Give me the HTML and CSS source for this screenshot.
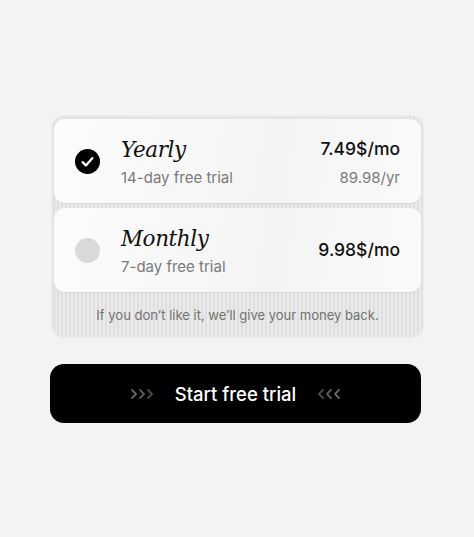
FILE: index.html
```html
<!DOCTYPE html>
<html>
<head>
<meta charset="utf-8">
<link rel="stylesheet" href="styles.css">
</head>
<body>
<div class="page">
  <div class="plans">
    <div class="card">
      <div class="radio checked">
        <svg width="25" height="25" viewBox="0 0 25 25"><circle cx="12.5" cy="12.5" r="12.5" fill="#000"/><path d="M7.6 13.1l3.3 3.3 6.4-7.2" fill="none" stroke="#fff" stroke-width="2.3" stroke-linecap="round" stroke-linejoin="round"/></svg>
      </div>
      <div class="info">
        <div class="title">Yearly</div>
        <div class="sub">14-day free trial</div>
      </div>
      <div class="price with-sub">
        <div class="amount">7.49$/mo</div>
        <div class="sub">89.98/yr</div>
      </div>
    </div>
    <div class="card">
      <div class="radio"></div>
      <div class="info">
        <div class="title">Monthly</div>
        <div class="sub">7-day free trial</div>
      </div>
      <div class="price">
        <div class="amount">9.98$/mo</div>
      </div>
    </div>
    <div class="note">If you don’t like it, we’ll give your money back.</div>
  </div>
  <button class="cta">
    <svg class="chev" width="24" height="12" viewBox="0 0 24 12"><g fill="none" stroke-width="1.8" stroke-linecap="round" stroke-linejoin="round"><path d="M2 2l4 4-4 4" stroke="#666"/><path d="M10 2l4 4-4 4" stroke="#5a5a5a"/><path d="M18 2l4 4-4 4" stroke="#4a4a4a"/></g></svg>
    <span class="label">Start free trial</span>
    <svg class="chev" width="24" height="12" viewBox="0 0 24 12"><g fill="none" stroke-width="1.8" stroke-linecap="round" stroke-linejoin="round"><path d="M6 2l-4 4 4 4" stroke="#4a4a4a"/><path d="M14 2l-4 4 4 4" stroke="#5a5a5a"/><path d="M22 2l-4 4 4 4" stroke="#666"/></g></svg>
  </button>
</div>
</body>
</html>
```
FILE: styles.css
```css
html, body { margin: 0; padding: 0; }
body {
  background: #f3f3f3;
  width: 474px;
  height: 537px;
  font-family: Inter, "Noto Sans", sans-serif;
}
.page {
  padding: 115px 0 0 50px;
}
.plans {
  margin-left: 1px;
  width: 367px;
  padding: 4px 3px 0;
  border-radius: 13px;
  background-color: #e3e3e3;
  background-image: repeating-linear-gradient(90deg, rgba(255,255,255,0.25) 0 2px, rgba(0,0,0,0.02) 2px 4px);
  box-shadow: inset 0 0 0 1.5px #ebebeb;
  display: flex;
  flex-direction: column;
  gap: 5px;
}
.card {
  height: 84px;
  box-sizing: border-box;
  background: linear-gradient(100deg, #fcfcfc, #f4f4f4 60%, #fafafa);
  border-radius: 11px;
  box-shadow: 0 1px 1px rgba(0,0,0,0.06);
  display: flex;
  align-items: center;
  padding: 0 21px 0 21px;
}
.radio {
  width: 25px;
  height: 25px;
  border-radius: 50%;
  background: #d9d9d9;
  flex: none;
}
.radio svg { display: block; }
.info {
  margin-left: 21px;
  flex: 1;
  display: flex;
  flex-direction: column;
  padding-top: 3px;
}
.title {
  font-family: "DejaVu Serif", serif;
  font-style: italic;
  font-size: 21.5px;
  line-height: 26px;
  color: #111;
  letter-spacing: -0.4px;
}
.sub {
  font-size: 15px;
  line-height: 20px;
  color: #7a7a7a;
  margin-top: 5px;
}
.price {
  display: flex;
  flex-direction: column;
  align-items: flex-end;
}
.price.with-sub { padding-top: 4px; }
.amount {
  font-size: 17.5px;
  font-weight: 500;
  line-height: 22px;
  color: #111;
}
.price .sub { margin-top: 8px; }
.note {
  height: 46px;
  display: flex;
  align-items: center;
  justify-content: center;
  font-size: 13px;
  color: #737373;
  margin-top: -5px;
}
.cta {
  margin-top: 26px;
  width: 371px;
  height: 59px;
  border: none;
  border-radius: 14px;
  background: #000;
  color: #fff;
  font-family: Inter, "Noto Sans", sans-serif;
  font-size: 18.5px;
  display: flex;
  align-items: center;
  justify-content: center;
  gap: 21px;
  padding: 0;
}
.chev { display: block; }
.label { font-weight: 500; }
```
